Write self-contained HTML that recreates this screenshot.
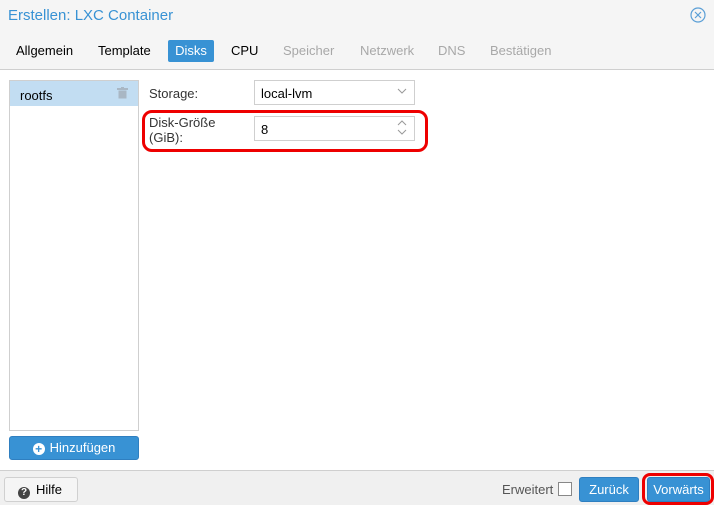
<!DOCTYPE html>
<html><head><style>
body{margin:0;width:714px;height:504px;overflow:hidden;font-family:"Liberation Sans",Arial,sans-serif;font-size:13px;color:#000;background:#fff;position:relative}
.a{position:absolute}
.tab{position:absolute;top:40px;height:22px;line-height:22px;font-size:13px}
.dis{color:#a8a8a8}
.btn{position:absolute;background:#3892d4;color:#fff;border:1px solid #2f7fc0;border-radius:3px;text-align:center;font-size:13px}
</style></head><body>
<div class="a" style="left:0;top:0;width:714px;height:69px;background:#f5f5f5;border-bottom:1px solid #cfcfcf"></div>
<div class="a" style="left:8px;top:7px;font-size:15px;color:#3892d4">Erstellen: LXC Container</div>
<svg class="a" style="left:690px;top:7px" width="16" height="16" viewBox="0 0 16 16"><circle cx="8" cy="8" r="7" fill="none" stroke="#5b9fd6" stroke-width="1.2"/><path d="M5 5L11 11M11 5L5 11" stroke="#5b9fd6" stroke-width="1.2"/></svg>
<div class="tab" style="left:16px">Allgemein</div>
<div class="tab" style="left:98px">Template</div>
<div class="tab" style="left:168px;width:46px;background:#3892d4;color:#fff;text-align:center;border-radius:2px">Disks</div>
<div class="tab" style="left:231px">CPU</div>
<div class="tab dis" style="left:283px">Speicher</div>
<div class="tab dis" style="left:360px">Netzwerk</div>
<div class="tab dis" style="left:438px">DNS</div>
<div class="tab dis" style="left:490px">Bestätigen</div>

<div class="a" style="left:9px;top:80px;width:128px;height:349px;border:1px solid #cfcfcf"></div>
<div class="a" style="left:10px;top:81px;width:128px;height:25px;background:#c2ddf2"></div>
<div class="a" style="left:20px;top:88px">rootfs</div>
<svg class="a" style="left:117px;top:87px" width="11" height="12" viewBox="0 0 11 12"><rect x="0" y="1" width="11" height="2" fill="#a9b7c4"/><rect x="4" y="0" width="3" height="1.5" fill="#a9b7c4"/><rect x="1.5" y="3.5" width="8" height="8" fill="#a9b7c4"/></svg>
<div class="btn" style="left:9px;top:436px;width:128px;height:22px;line-height:22px"><span style="display:inline-block;width:12px;height:12px;border-radius:50%;background:#fff;color:#3892d4;font-weight:bold;line-height:12px;font-size:12px;vertical-align:-1px;margin-right:5px">+</span>Hinzufügen</div>

<div class="a" style="left:149px;top:86px;color:#333">Storage:</div>
<div class="a" style="left:254px;top:80px;width:159px;height:23px;border:1px solid #cfcfcf"></div>
<div class="a" style="left:261px;top:86px">local-lvm</div>
<svg class="a" style="left:397px;top:88px" width="10" height="6"><path d="M1 1L5 5L9 1" fill="none" stroke="#999"/></svg>
<div class="a" style="left:149px;top:115px;color:#333;line-height:15px">Disk-Größe<br>(GiB):</div>
<div class="a" style="left:254px;top:116px;width:159px;height:23px;border:1px solid #cfcfcf"></div>
<div class="a" style="left:261px;top:122px">8</div>
<svg class="a" style="left:397px;top:120px" width="10" height="16"><path d="M1 5L5 1L9 5M1 10L5 14L9 10" fill="none" stroke="#999"/></svg>
<div class="a" style="left:142px;top:110px;width:280px;height:36px;border:3px solid #e00;border-radius:10px"></div>

<div class="a" style="left:0;top:470px;width:714px;height:34px;background:#f0f0f0;border-top:1px solid #cfcfcf"></div>
<div class="a" style="left:4px;top:477px;width:72px;height:23px;background:#f5f5f5;border:1px solid #d0d0d0;border-radius:3px;line-height:23px;font-size:13px"><span style="display:inline-block;width:12px;height:12px;border-radius:50%;background:#444;color:#fff;font-size:10px;font-weight:bold;text-align:center;line-height:12px;margin:0 6px 0 13px;vertical-align:-1px">?</span>Hilfe</div>
<div class="a" style="left:502px;top:482px;color:#555">Erweitert</div>
<div class="a" style="left:558px;top:482px;width:12px;height:12px;border:1px solid #888;background:#fff"></div>
<div class="btn" style="left:579px;top:477px;width:58px;height:23px;line-height:23px">Zurück</div>
<div class="btn" style="left:647px;top:477px;width:61px;height:23px;line-height:23px">Vorwärts</div>
<div class="a" style="left:642px;top:473px;width:66px;height:26px;border:3px solid #e00;border-radius:8px"></div>
</body></html>
